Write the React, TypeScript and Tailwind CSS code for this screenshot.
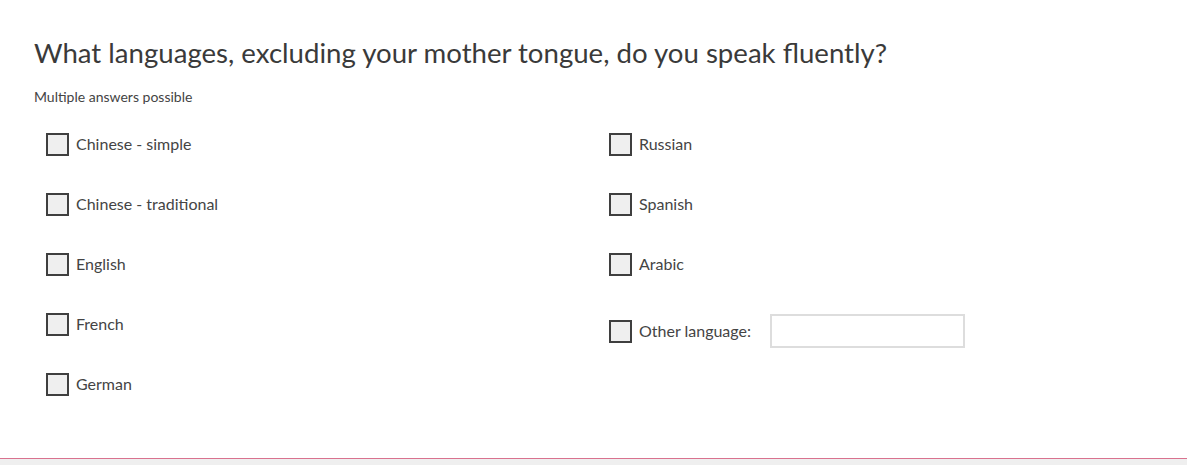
import React from "react";

const left = ["Chinese - simple", "Chinese - traditional", "English", "French", "German"];
const right = ["Russian", "Spanish", "Arabic"];

function Box() {
  return <span className="block w-[23px] h-[23px] border-2 border-[#3f3f3f] bg-[#efefef] shrink-0" />;
}

function Item({ label }: { label: string }) {
  return (
    <label className="flex items-center h-[60px]">
      <Box />
      <span className="ml-[7px] text-[16px] text-[#444]">{label}</span>
    </label>
  );
}

export default function App() {
  return (
    <div className="w-[1187px] h-[465px] bg-[#efefef] flex flex-col" style={{ fontFamily: "Lato, 'Open Sans', sans-serif" }}>
      <div className="h-[459px] shrink-0 bg-white border-b border-[#d9728f] pl-[34px] pt-[34px]">
        <h1 className="text-[27.6px] leading-[38px] text-[#3a3a3a]">What languages, excluding your mother tongue, do you speak fluently?</h1>
        <p className="mt-[17px] text-[14px] leading-[16px] text-[#444]">Multiple answers possible</p>
        <div className="flex mt-[9px] pl-[12px]">
          <div className="w-[563px] flex flex-col">
            {left.map((l) => (
              <Item key={l} label={l} />
            ))}
          </div>
          <div className="flex flex-col">
            {right.map((l) => (
              <Item key={l} label={l} />
            ))}
            <div className="flex items-center h-[74px]">
              <Box />
              <span className="ml-[7px] text-[16px] text-[#444]">Other language:</span>
              <input type="text" className="ml-[19px] w-[195px] h-[34px] border-2 border-[#dddddd] bg-white outline-none" />
            </div>
          </div>
        </div>
      </div>
    </div>
  );
}
